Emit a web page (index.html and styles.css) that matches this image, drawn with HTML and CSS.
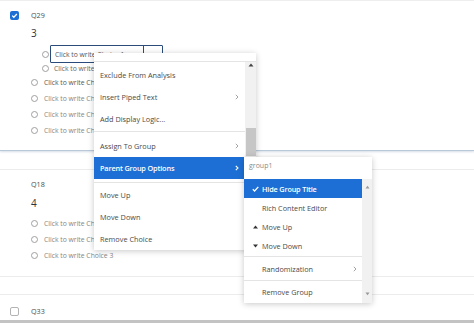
FILE: index.html
```html
<!DOCTYPE html>
<html>
<head>
<meta charset="utf-8">
<link rel="stylesheet" href="styles.css">
</head>
<body>
<div class="page">
  <section class="card card-q29">
    <div class="q-head">
      <span class="cb cb-on"><svg width="9" height="9" viewBox="0 0 9 9"><path d="M2.2 4.6l1.6 1.6L6.9 3" fill="none" stroke="#fff" stroke-width="1.3"/></svg></span>
      <span class="q-label">Q29</span>
    </div>
    <div class="q-text">3</div>
    <div class="choices">
      <div class="choice choice-edit">
        <span class="radio"></span>
        <div class="choice-input"><span class="ci-text">Click to write Choice 1</span><span class="ci-side"></span></div>
      </div>
      <div class="choice choice-drag"><span class="radio"></span><span class="ct">Click to write Choice 2</span></div>
      <div class="choice choice-row ct-dark"><span class="radio"></span><span class="ct">Click to write Choice 2</span></div>
      <div class="choice choice-row"><span class="radio"></span><span class="ct">Click to write Choice 3</span></div>
      <div class="choice choice-row"><span class="radio"></span><span class="ct">Click to write Choice 4</span></div>
      <div class="choice choice-row"><span class="radio"></span><span class="ct">Click to write Choice 5</span></div>
    </div>
  </section>

  <section class="card card-q18">
    <div class="q-head">
      <span class="cb cb-blank"></span>
      <span class="q-label">Q18</span>
    </div>
    <div class="q-text q-text-2">4</div>
    <div class="choices choices-2">
      <div class="choice choice-row16"><span class="radio"></span><span class="ct">Click to write Choice 1</span></div>
      <div class="choice choice-row16"><span class="radio"></span><span class="ct">Click to write Choice 2</span></div>
      <div class="choice choice-row16"><span class="radio"></span><span class="ct">Click to write Choice 3</span></div>
    </div>
  </section>

  <section class="card card-q33">
    <div class="q-head">
      <span class="cb cb-off"></span>
      <span class="q-label">Q33</span>
    </div>
  </section>
  <div class="bottom-bar"></div>
</div>

<div class="menu">
  <div class="menu-scroll">
    <div class="menu-list">
      <div class="msec msec-1">
        <div class="mi">Exclude From Analysis</div>
        <div class="mi">Insert Piped Text<svg class="chev" width="4" height="6" viewBox="0 0 4 6"><path d="M0.8 0.8L3 3L0.8 5.2" fill="none" stroke="#999" stroke-width="0.9"/></svg></div>
        <div class="mi">Add Display Logic...</div>
      </div>
      <div class="msec msec-2">
        <div class="mi">Assign To Group<svg class="chev" width="4" height="6" viewBox="0 0 4 6"><path d="M0.8 0.8L3 3L0.8 5.2" fill="none" stroke="#999" stroke-width="0.9"/></svg></div>
        <div class="mi mi-active">Parent Group Options<svg class="chev" width="4" height="6" viewBox="0 0 4 6"><path d="M0.8 0.8L3 3L0.8 5.2" fill="none" stroke="#fff" stroke-width="1.1"/></svg></div>
      </div>
      <div class="msec msec-3">
        <div class="mi">Move Up</div>
        <div class="mi">Move Down</div>
        <div class="mi">Remove Choice</div>
      </div>
    </div>
    <div class="track">
      <svg class="arrow-up" width="6" height="4" viewBox="0 0 6 4"><path d="M0.5 3.5L3 0.5L5.5 3.5Z" fill="#444"/></svg>
      <div class="thumb"></div>
    </div>
  </div>
</div>

<div class="submenu">
  <div class="sub-head">group1</div>
  <div class="sub-scroll">
    <div class="sub-list">
      <div class="ssec ssec-1">
        <div class="si si-active"><span class="si-ic"><svg width="7" height="6" viewBox="0 0 7 6"><path d="M0.8 3.2l1.8 1.8L6.3 0.9" fill="none" stroke="#fff" stroke-width="1.3"/></svg></span>Hide Group Title</div>
        <div class="si"><span class="si-ic"></span>Rich Content Editor</div>
        <div class="si"><span class="si-ic"><svg width="5" height="4" viewBox="0 0 5 4"><path d="M0 3.5L2.5 0.5L5 3.5Z" fill="#333"/></svg></span>Move Up</div>
        <div class="si"><span class="si-ic"><svg width="5" height="4" viewBox="0 0 5 4"><path d="M0 0.5L2.5 3.5L5 0.5Z" fill="#333"/></svg></span>Move Down</div>
      </div>
      <div class="ssec ssec-2">
        <div class="si si-rand"><span class="si-ic"></span><span class="si-grow">Randomization</span><svg class="chev" width="4" height="6" viewBox="0 0 4 6"><path d="M0.8 0.8L3 3L0.8 5.2" fill="none" stroke="#999" stroke-width="0.9"/></svg></div>
      </div>
      <div class="ssec ssec-3">
        <div class="si si-remove"><span class="si-ic"></span>Remove Group</div>
      </div>
    </div>
    <div class="sub-track">
      <svg width="5" height="4" viewBox="0 0 5 4"><path d="M0.5 3.5L2.5 0.8L4.5 3.5Z" fill="#999"/></svg>
      <svg width="5" height="4" viewBox="0 0 5 4"><path d="M0.5 0.5L2.5 3.2L4.5 0.5Z" fill="#999"/></svg>
    </div>
  </div>
</div>
</body>
</html>
```

FILE: styles.css
```css
* { box-sizing: border-box; margin: 0; padding: 0; }
html, body { width: 474px; height: 323px; overflow: hidden; background: #fff; }
body { font-family: "Open Sans", Lato, sans-serif; color: #555; position: relative; }

.page { display: flex; flex-direction: column; height: 323px; }

.card { background: #fff; flex: none; }
.card-q29 {
  height: 151px;
  border-top: 1px solid #eeeeee;
  border-bottom: 1px solid #b9c9da;
  box-shadow: 0 1px 2px rgba(90, 120, 160, 0.25);
  padding-top: 8px;
}
.card-q18 {
  margin-top: 18px;
  height: 108px;
  border-top: 1px solid #ececec;
  border-bottom: 1px solid #ececec;
  padding-top: 8px;
}
.card-q33 {
  margin-top: 17px;
  height: 26px;
  border-top: 1px solid #ececec;
  padding-top: 10px;
}
.bottom-bar { flex: 1; background: #c3c3c3; }

.q-head { display: flex; align-items: center; height: 12px; padding-left: 10px; gap: 12px; }
.q-label { font-size: 7.2px; color: #4d4d4d; }
.cb { width: 9px; height: 9px; border-radius: 2px; flex: none; display: flex; align-items: center; justify-content: center; }
.cb-on { background: #1c6fd3; }
.cb-off { border: 1px solid #b3b3b3; }
.cb-blank { background: transparent; }

.q-text { padding-left: 31px; margin-top: 5px; font-size: 10px; line-height: 14px; color: #333; }
.q-text-2 { margin-top: 6px; }

.choices { padding-left: 31px; margin-top: 5px; }
.choice { display: flex; align-items: center; font-size: 6.8px; color: #858585; white-space: nowrap; }
.radio { width: 7px; height: 7px; border: 1px solid #a0a0a0; border-radius: 50%; flex: none; background: #fff; }

.choice-edit { height: 18px; padding-left: 11px; gap: 1px; }
.choice-input {
  width: 113px; height: 18px;
  border: 1px solid #2b4c7a; border-radius: 1px;
  display: flex; align-items: center;
}
.ci-text { flex: 1; padding-left: 4px; color: #555; overflow: hidden; }
.ci-side { width: 19px; height: 100%; border-left: 1px solid #2b4c7a; }

.choice-drag { height: 11px; padding-left: 11px; gap: 5px; color: #666; }
.choice-row { height: 16.25px; gap: 6px; }
.ct-dark { color: #555; }
.choice-row16 { height: 16px; gap: 6px; }

/* context menu */
.menu {
  position: absolute; left: 94px; top: 53px;
  width: 162px; height: 197px;
  background: #fff;
  box-shadow: 0 1px 6px rgba(0, 0, 0, 0.22);
  padding-top: 8px;
}
.menu-scroll { display: flex; height: 189px; border-top: 1px solid #e4e4e4; }
.menu-list { flex: 1; }
.msec-1 { padding: 2px 0 1px; }
.msec-2 { padding: 3px 0 3px; border-top: 1px solid #e4e4e4; }
.msec-3 { padding: 1px 0 0; border-top: 1px solid #e4e4e4; }
.mi {
  height: 22px; display: flex; align-items: center; justify-content: space-between;
  padding: 0 6px 0 6px; font-size: 7.3px; color: #4a4a4a; white-space: nowrap;
}
.mi-active { background: #1d6fd5; color: #fff; font-weight: 600; letter-spacing: -0.15px; }

.track { width: 11px; background: #f1f1f1; display: flex; flex-direction: column; align-items: center; }
.arrow-up { margin-top: 1px; }
.thumb { width: 10px; height: 28px; margin-top: 61px; background: #c6c6c6; }

/* submenu */
.submenu {
  position: absolute; left: 244px; top: 157px;
  width: 128px; height: 146px;
  background: #fff;
  box-shadow: 0 1px 6px rgba(0, 0, 0, 0.22);
}
.sub-head { height: 22px; padding: 4px 0 0 5px; font-size: 7px; line-height: 10px; color: #8a8a8a; }
.sub-scroll { display: flex; height: 124px; }
.sub-list { flex: 1; }
.ssec-1 { padding-bottom: 1px; }
.ssec-2 { border-top: 1px solid #e4e4e4; }
.ssec-3 { border-top: 1px solid #e4e4e4; }
.si {
  height: 19px; display: flex; align-items: center; padding-left: 4px; padding-right: 5px;
  font-size: 7.25px; color: #4a4a4a; white-space: nowrap;
}
.si-ic { width: 14px; display: flex; align-items: center; justify-content: center; flex: none; }
.si-active { background: #1d6fd5; color: #fff; font-weight: 600; letter-spacing: -0.15px; }
.si-rand { height: 23px; }
.si-grow { flex: 1; }
.si-remove { height: 22px; }
.sub-track {
  width: 10px; background: #f1f1f1;
  display: flex; flex-direction: column; align-items: center; justify-content: space-between;
  padding: 6px 0 7px;
}
```
